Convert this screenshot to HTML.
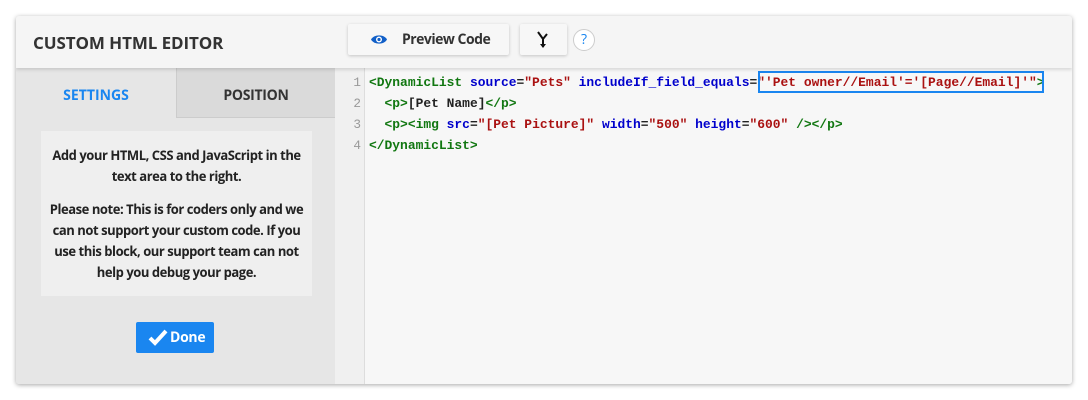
<!DOCTYPE html>
<html><head><style>
*{box-sizing:border-box;margin:0;padding:0}
body{width:1088px;height:400px;background:#fff;font-family:"Open Sans","Liberation Sans",sans-serif;position:relative;overflow:hidden}
.panel{position:absolute;left:16px;top:16px;width:1056px;height:368px;background:#f5f5f5;box-shadow:0 1px 5px rgba(0,0,0,.35);border-radius:3px;overflow:hidden}
.hdr{position:absolute;left:0;top:0;width:1056px;height:52px;background:#f5f5f5;box-shadow:0 2px 3px rgba(0,0,0,.12);z-index:2}
.title{position:absolute;left:17px;top:15px;font-size:17px;font-weight:bold;color:#333;letter-spacing:-.1px}
.btn{position:absolute;top:8px;height:31px;background:#f7f7f7;border-radius:2px;box-shadow:0 1px 3px rgba(0,0,0,.2)}
.side{position:absolute;left:0;top:52px;width:319px;height:316px;background:#e6e6e6}
.tab{position:absolute;top:0;height:50px;font-size:14px;font-weight:bold;text-align:center;line-height:56px}
.info{position:absolute;left:25px;top:63px;width:271px;height:165px;background:#efefef;font-size:13px;font-weight:bold;color:#222;text-align:center;line-height:21px;padding:14px 0 0;letter-spacing:-.45px}
.info p{margin-bottom:12px}
.done{position:absolute;left:120px;top:254px;width:78px;height:31px;background:#1a86f0;border-radius:2px;color:#fff;font-size:14px;font-weight:bold;letter-spacing:-.3px;line-height:31px;padding-left:34px}
.ed{position:absolute;left:319px;top:52px;width:737px;height:316px;background:#f7f7f7}
.gut{position:absolute;left:0;top:0;width:30px;height:316px;background:#f0f0f0;border-right:1px solid #ddd}
.ln{position:absolute;left:0;width:26px;text-align:right;font-family:"Liberation Mono",monospace;font-size:12.7px;color:#999}
.code{position:absolute;left:34px;font-family:"Liberation Mono",monospace;font-weight:bold;font-size:12.95px;white-space:pre;color:#222}
.t{color:#117711}.a{color:#0000cc}.s{color:#aa1111}
</style></head><body>
<div class="panel">
 <div class="hdr">
  <div class="title">CUSTOM HTML EDITOR</div>
  <div class="btn" style="left:332px;width:161px">
   <svg style="position:absolute;left:22px;top:9px" width="18" height="13" viewBox="0 0 18 13"><path d="M1 6.5C4 1 14 1 17 6.5C14 12 4 12 1 6.5Z" fill="#1260c8"/><circle cx="9" cy="6.5" r="3" fill="#fff"/><circle cx="9" cy="6.5" r="1.6" fill="#1260c8"/></svg>
   <span style="position:absolute;left:54px;top:6px;font-size:14px;font-weight:bold;color:#333;letter-spacing:-.5px">Preview Code</span>
  </div>
  <div class="btn" style="left:504px;width:47px">
   <svg style="position:absolute;left:15px;top:6px" width="16" height="20" viewBox="0 0 16 20"><path d="M3 2L8 9L12 4M8 9V17" stroke="#111" stroke-width="2" fill="none"/><path d="M5 14L8 18L11 14Z" fill="#111"/></svg>
  </div>
  <div style="position:absolute;left:557px;top:13px;width:22px;height:22px;border-radius:50%;border:1px solid #ccc;background:#fff;color:#1a86f0;font-size:14px;text-align:center;line-height:20px">?</div>
 </div>
 <div class="side">
  <div class="tab" style="left:0;width:160px;color:#1a86f0;background:#e6e6e6">SETTINGS</div>
  <div class="tab" style="left:160px;width:159px;color:#333;background:#dadada;border-left:1px solid #ccc;border-bottom:1px solid #ccc;letter-spacing:-.3px">POSITION</div>
  <div class="info"><p>Add your HTML, CSS and JavaScript in the text area to the right.</p><p>Please note: This is for coders only and we can not support your custom code. If you use this block, our support team can not help you debug your page.</p></div>
  <div class="done"><svg style="position:absolute;left:12px;top:7px" width="20" height="17" viewBox="0 0 20 17"><path d="M2 9L7 14L18 2" stroke="#fff" stroke-width="4" fill="none"/></svg>Done</div>
 </div>
 <div class="ed">
  <div class="gut"></div>
  <div class="ln" style="top:7px">1</div><div class="ln" style="top:28px">2</div><div class="ln" style="top:49px">3</div><div class="ln" style="top:70px">4</div>
  <div class="code" style="top:7px"><span class="t">&lt;DynamicList</span> <span class="a">source</span>=<span class="s">"Pets"</span> <span class="a">includeIf_field_equals</span>=<span class="s">"'Pet owner//Email'='[Page//Email]'"</span><span class="t">&gt;</span></div>
  <div style="position:absolute;left:423px;top:3px;width:286px;height:22px;border:2px solid #1a86f0"></div>
  <div class="code" style="top:28px">  <span class="t">&lt;p&gt;</span>[Pet Name]<span class="t">&lt;/p&gt;</span></div>
  <div class="code" style="top:49px">  <span class="t">&lt;p&gt;&lt;img</span> <span class="a">src</span>=<span class="s">"[Pet Picture]"</span> <span class="a">width</span>=<span class="s">"500"</span> <span class="a">height</span>=<span class="s">"600"</span> <span class="t">/&gt;&lt;/p&gt;</span></div>
  <div class="code" style="top:70px"><span class="t">&lt;/DynamicList&gt;</span></div>
 </div>
</div>
</body></html>
